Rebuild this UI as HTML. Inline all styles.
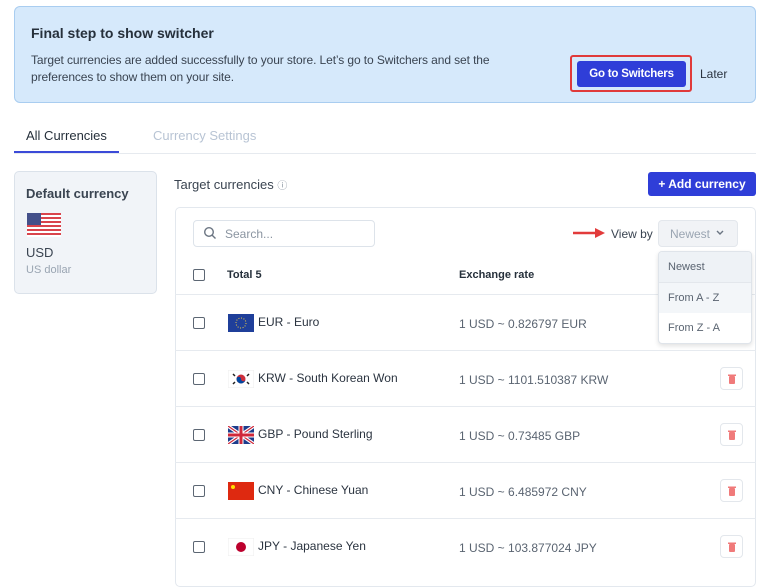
<!DOCTYPE html>
<html><head><meta charset="utf-8"><style>
*{box-sizing:border-box;margin:0;padding:0}
body{width:768px;height:570px;overflow:hidden;background:#fff;font-family:"Liberation Sans",sans-serif;color:#2b3440;position:relative}
.a{position:absolute}
.banner{left:14px;top:6px;width:742px;height:97px;background:#d6e9fb;border:1px solid #a9cdf0;border-radius:6px}
.chk{width:12px;height:12px;border:1.5px solid #5c6673;border-radius:2px;background:#fff}
.row{left:175px;width:581px;height:56px;border-top:1px solid #e6eaef}
.trash{width:23px;height:23px;border:1px solid #e3e7ec;border-radius:4px;background:#fff}
.t12{font-size:12px}
</style></head><body>
<div class="a banner"></div>
<div class="a" style="left:31px;top:25px;font-size:14px;font-weight:bold;color:#26303b">Final step to show switcher</div>
<div class="a t12" style="left:31px;top:52px;line-height:17px;color:#3a4451;width:480px;letter-spacing:-0.1px">Target currencies are added successfully to your store. Let’s go to Switchers and set the preferences to show them on your site.</div>
<div class="a" style="left:570px;top:55px;width:122px;height:37px;border:2px solid #e03a3a;border-radius:3px"></div>
<div class="a" style="left:577px;top:61px;width:109px;height:26px;background:#2f3ed8;border-radius:3px;color:#fff;font-size:11.5px;font-weight:bold;text-align:center;line-height:26px;letter-spacing:-0.2px">Go to Switchers</div>
<div class="a t12" style="left:700px;top:67px;color:#2b3440">Later</div>

<div class="a" style="left:26px;top:128px;font-size:13px;color:#26303b">All Currencies</div>
<div class="a" style="left:153px;top:128px;font-size:13px;color:#b8c4d4">Currency Settings</div>
<div class="a" style="left:14px;top:153px;width:742px;height:1px;background:#e6eaef"></div>
<div class="a" style="left:14px;top:151px;width:105px;height:2px;background:#3b4ad8"></div>

<div class="a" style="left:14px;top:171px;width:143px;height:123px;background:#f1f4f8;border:1px solid #dbe2ea;border-radius:5px"></div>
<div class="a" style="left:26px;top:186px;font-size:13px;font-weight:bold;color:#3a4451">Default currency</div>
<svg class="a" style="left:27px;top:213px" width="34" height="24" viewBox="0 0 34 24">
<rect width="34" height="24" fill="#fff"/>
<g fill="#d9444c"><rect y="0" width="34" height="2"/><rect y="4" width="34" height="2"/><rect y="8" width="34" height="2"/><rect y="12" width="34" height="2"/><rect y="16" width="34" height="2"/><rect y="20" width="34" height="2"/></g>
<rect width="14" height="12" fill="#44508a"/></svg>
<div class="a" style="left:26px;top:245px;font-size:13px;color:#3a4451">USD</div>
<div class="a" style="left:26px;top:264px;font-size:11px;color:#9aa5b2">US dollar</div>

<div class="a" style="left:174px;top:177px;font-size:13px;color:#3a4451">Target currencies <span style="font-size:10px;color:#8b95a1">ⓘ</span></div>
<div class="a" style="left:648px;top:172px;width:108px;height:24px;background:#2f3ed8;border-radius:3px;color:#fff;font-size:12px;font-weight:bold;text-align:center;line-height:24px">+ Add currency</div>

<div class="a" style="left:175px;top:207px;width:581px;height:380px;border:1px solid #e3e8ee;border-radius:5px"></div>
<div class="a" style="left:193px;top:220px;width:182px;height:27px;border:1px solid #dde3ea;border-radius:4px"></div>
<svg class="a" style="left:203px;top:226px" width="14" height="14" viewBox="0 0 14 14"><circle cx="6" cy="6" r="4.3" fill="none" stroke="#6b7582" stroke-width="1.4"/><path d="M9.2 9.2L12.5 12.5" stroke="#6b7582" stroke-width="1.4"/></svg>
<div class="a t12" style="left:225px;top:227px;color:#8b95a1">Search...</div>
<svg class="a" style="left:573px;top:227px" width="34" height="12" viewBox="0 0 34 12"><path d="M0 6H24" stroke="#e23b3b" stroke-width="2.5"/><path d="M22 1L32 6L22 11Z" fill="#e23b3b"/></svg>
<div class="a t12" style="left:611px;top:227px;color:#3a4451">View by</div>
<div class="a" style="left:658px;top:220px;width:80px;height:27px;background:#f1f3f6;border:1px solid #e3e7ec;border-radius:4px"></div>
<div class="a t12" style="left:670px;top:227px;color:#9aa5b2">Newest</div>
<svg class="a" style="left:716px;top:230px" width="8" height="6" viewBox="0 0 8 6"><path d="M1 1L4 4L7 1" fill="none" stroke="#6b7582" stroke-width="1.4"/></svg>

<div class="a chk" style="left:193px;top:269px"></div>
<div class="a" style="left:227px;top:269px;font-size:11px;font-weight:bold;color:#26303b">Total 5</div>
<div class="a" style="left:459px;top:269px;font-size:11px;font-weight:bold;color:#26303b">Exchange rate</div>

<div class="a row" style="top:294px"></div>
<div class="a row" style="top:350px"></div>
<div class="a row" style="top:406px"></div>
<div class="a row" style="top:462px"></div>
<div class="a row" style="top:518px"></div>

<div class="a chk" style="left:193px;top:317px"></div>
<svg class="a" style="left:228px;top:314px" width="26" height="18"><rect width="26" height="18" fill="#1f3f9a"/><circle cx="13" cy="9" r="5" fill="none" stroke="#e6c84a" stroke-width="1" stroke-dasharray="1 1.6"/></svg>
<div class="a t12" style="left:258px;top:315px">EUR - Euro</div>
<div class="a t12" style="left:459px;top:317px;color:#5a6471">1 USD ~ 0.826797 EUR</div>

<div class="a chk" style="left:193px;top:373px"></div>
<svg class="a" style="left:228px;top:370px" width="26" height="18"><rect width="26" height="18" fill="#fff" stroke="#eee"/><circle cx="13" cy="9" r="4.5" fill="#cd2e3a"/><path d="M8.5 9a4.5 4.5 0 0 0 9 0a2.25 2.25 0 0 1-4.5 0a2.25 2.25 0 0 0-4.5 0z" fill="#0047a0"/><g stroke="#222" stroke-width="1.5"><path d="M5 4l2 2M21 4l-2 2M5 14l2-2M21 14l-2-2"/></g></svg>
<div class="a t12" style="left:258px;top:371px">KRW - South Korean Won</div>
<div class="a t12" style="left:459px;top:373px;color:#5a6471">1 USD ~ 1101.510387 KRW</div>

<div class="a chk" style="left:193px;top:429px"></div>
<svg class="a" style="left:228px;top:426px" width="26" height="18" viewBox="0 0 26 18"><rect width="26" height="18" fill="#1d3c8c"/><path d="M0 0L26 18M26 0L0 18" stroke="#fff" stroke-width="3.5"/><path d="M0 0L26 18M26 0L0 18" stroke="#d0283a" stroke-width="1.2"/><path d="M13 0V18M0 9H26" stroke="#fff" stroke-width="5"/><path d="M13 0V18M0 9H26" stroke="#d0283a" stroke-width="3"/></svg>
<div class="a t12" style="left:258px;top:427px">GBP - Pound Sterling</div>
<div class="a t12" style="left:459px;top:429px;color:#5a6471">1 USD ~ 0.73485 GBP</div>

<div class="a chk" style="left:193px;top:485px"></div>
<svg class="a" style="left:228px;top:482px" width="26" height="18"><rect width="26" height="18" fill="#de2910"/><circle cx="5" cy="5" r="2" fill="#ffde00"/></svg>
<div class="a t12" style="left:258px;top:483px">CNY - Chinese Yuan</div>
<div class="a t12" style="left:459px;top:485px;color:#5a6471">1 USD ~ 6.485972 CNY</div>

<div class="a chk" style="left:193px;top:541px"></div>
<svg class="a" style="left:228px;top:538px" width="26" height="18"><rect width="26" height="18" fill="#fff" stroke="#eee"/><circle cx="13" cy="9" r="5" fill="#bc002d"/></svg>
<div class="a t12" style="left:258px;top:539px">JPY - Japanese Yen</div>
<div class="a t12" style="left:459px;top:541px;color:#5a6471">1 USD ~ 103.877024 JPY</div>

<div class="a trash" style="left:720px;top:367px"></div>
<div class="a trash" style="left:720px;top:423px"></div>
<div class="a trash" style="left:720px;top:479px"></div>
<div class="a trash" style="left:720px;top:535px"></div>
<svg class="a" style="left:728px;top:374px" width="8" height="10"><rect x="1" y="2" width="6" height="8" rx="1" fill="#f07a7a"/><rect y="0.5" width="8" height="1.5" fill="#f07a7a"/></svg>
<svg class="a" style="left:728px;top:430px" width="8" height="10"><rect x="1" y="2" width="6" height="8" rx="1" fill="#f07a7a"/><rect y="0.5" width="8" height="1.5" fill="#f07a7a"/></svg>
<svg class="a" style="left:728px;top:486px" width="8" height="10"><rect x="1" y="2" width="6" height="8" rx="1" fill="#f07a7a"/><rect y="0.5" width="8" height="1.5" fill="#f07a7a"/></svg>
<svg class="a" style="left:728px;top:542px" width="8" height="10"><rect x="1" y="2" width="6" height="8" rx="1" fill="#f07a7a"/><rect y="0.5" width="8" height="1.5" fill="#f07a7a"/></svg>

<div class="a" style="left:658px;top:251px;width:94px;height:93px;background:#fff;border:1px solid #dfe4ea;border-radius:4px;box-shadow:0 2px 5px rgba(0,0,0,.12);overflow:hidden">
<div style="height:31px;background:#eef2f6;border-bottom:1px solid #e3e7ec;padding-left:9px;line-height:31px;font-size:11px;color:#5a6471">Newest</div>
<div style="height:30px;background:#f3f6f9;padding-left:9px;line-height:30px;font-size:11px;color:#5a6471">From A - Z</div>
<div style="height:30px;padding-left:9px;line-height:30px;font-size:11px;color:#5a6471">From Z - A</div>
</div>
</body></html>
